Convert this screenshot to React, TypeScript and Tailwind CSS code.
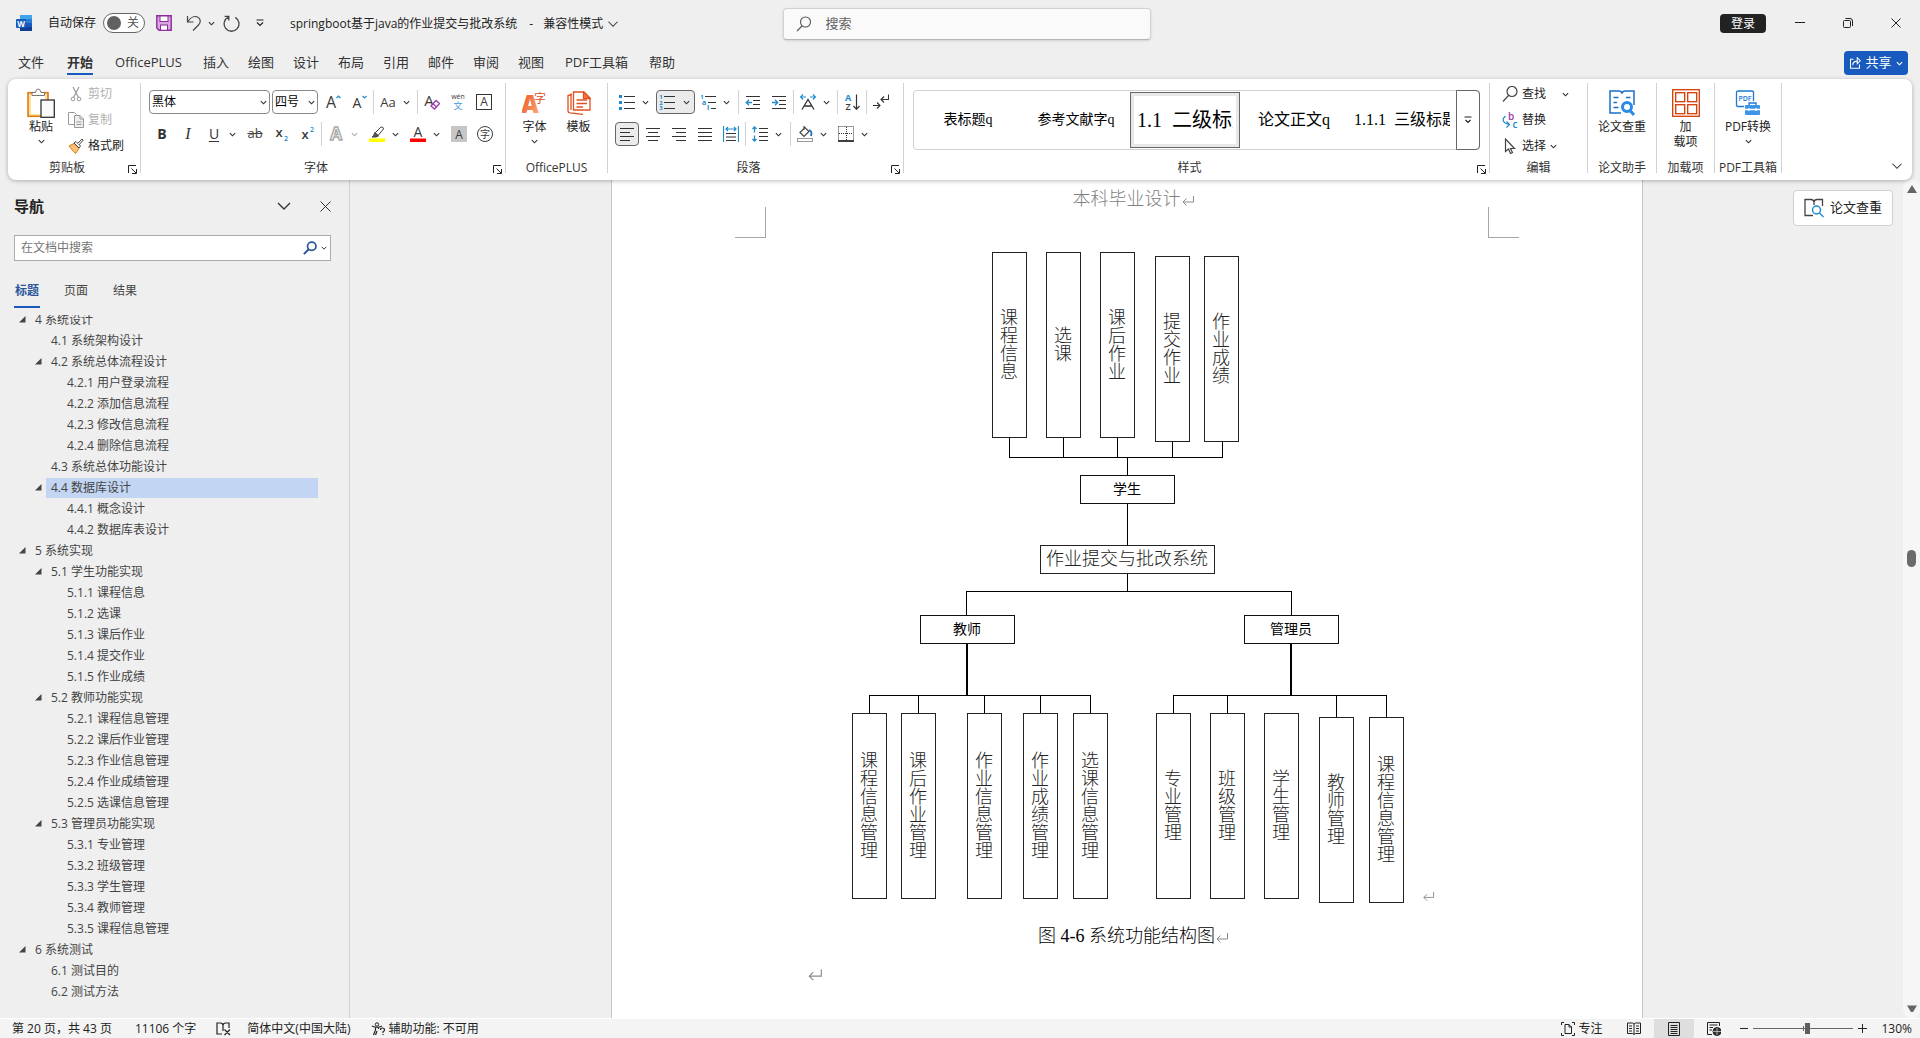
import { useState } from "react"
import type { ReactNode } from "react"

const UI = "font-['Open_Sans','Noto_Sans_CJK_SC',sans-serif]"
const SONG = "font-['Liberation_Serif','Noto_Sans_CJK_SC',serif]"

/* ---------- small shared pieces ---------- */

function Chevron({ size = 7, color = "#333" }: { size?: number; color?: string }) {
  return (
    <svg width={size} height={size} viewBox="0 0 8 8" fill="none" stroke={color} strokeWidth={size > 9 ? 0.7 : 1.3}>
      <path d="M1 2.5 L4 5.5 L7 2.5" />
    </svg>
  )
}

function Svg({ children, w = 16, h = 16, vb = "0 0 16 16" }: { children: ReactNode; w?: number; h?: number; vb?: string }) {
  return (
    <svg width={w} height={h} viewBox={vb} fill="none" stroke="#3b3b3b" strokeWidth={1} className="shrink-0">
      {children}
    </svg>
  )
}

function Divider() {
  return <div className="mt-1 h-[90px] w-px shrink-0 bg-[#d1d1d1]" />
}

function Sep() {
  return <div className="mx-px h-6 w-px shrink-0 bg-[#d1d1d1]" />
}

interface ToolProps {
  title: string
  children: ReactNode
  drop?: boolean
  dim?: boolean
}

function Tool({ title, children, drop, dim }: ToolProps) {
  return (
    <button title={title} className="flex h-6 shrink-0 items-center">
      <span className="flex w-[26px] items-center justify-center">{children}</span>
      {drop && (
        <span className="flex w-[15px] items-center pl-0.5">
          <Chevron color={dim ? "#aaa" : "#333"} />
        </span>
      )}
    </button>
  )
}

function Launcher({ title }: { title: string }) {
  return (
    <button title={title} className="mr-0.5 flex w-3 items-center justify-center pt-0.5">
      <Svg w={9} h={9} vb="0 0 9 9">
        <path d="M0.5 8 V0.5 H8 M3.5 3.5 L8 8 M8.5 4 V8.5 H4" stroke="#222" />
      </Svg>
    </button>
  )
}

interface GroupProps {
  label: string
  width: string
  launcher?: boolean
  children: ReactNode
}

function Group({ label, width, launcher, children }: GroupProps) {
  return (
    <section className={`flex flex-col ${width}`}>
      <div className="h-[81px]">{children}</div>
      <div className="flex h-4 text-xs leading-4 text-[#333]">
        <span className="flex-1 whitespace-nowrap text-center">{label}</span>
        {launcher && <Launcher title={`${label}设置`} />}
      </div>
    </section>
  )
}

function BigButton({ icon, lines, drop }: { icon: ReactNode; lines: string[]; drop?: boolean }) {
  return (
    <button className="flex flex-col items-center pt-2 text-xs leading-[15px] whitespace-nowrap text-[#222]">
      <span className="flex h-8 items-center">{icon}</span>
      {lines.map((l) => (
        <span key={l}>{l}</span>
      ))}
      {drop && (
        <span className="mt-1">
          <Chevron />
        </span>
      )}
    </button>
  )
}

/* ---------- title bar and tabs ---------- */

function TitleBar() {
  const [autoSave, setAutoSave] = useState(false)
  return (
    <header className="flex h-12 items-start text-xs text-[#222]">
      <div className="flex h-[46px] flex-1 items-center pl-4 whitespace-nowrap">
        <svg width="16" height="16" viewBox="0 0 16 16">
          <rect x="4" y="0" width="12" height="4.2" fill="#41a5ee" />
          <rect x="4" y="4" width="12" height="4" fill="#2b7cd3" />
          <rect x="4" y="8" width="12" height="4" fill="#185abd" />
          <rect x="4" y="12" width="12" height="4" fill="#103f91" />
          <rect x="0" y="4" width="10" height="9" rx="1" fill="#185abd" />
          <text x="5" y="11.5" fontSize="8" fontWeight="700" fill="#fff" textAnchor="middle" fontFamily="Open Sans">W</text>
        </svg>
        <label className="ml-4 flex items-center gap-[7px]">
          自动保存
          <input type="checkbox" className="sr-only" checked={autoSave} onChange={(e) => setAutoSave(e.target.checked)} />
          <span className="flex h-5 w-[42px] items-center gap-1.5 rounded-full border border-[#666] bg-white pl-[3px] text-[#555]">
            <span className="size-3.5 rounded-full bg-[#616161]" />
            {autoSave ? "开" : "关"}
          </span>
        </label>
        <button title="保存" className="ml-[11px]">
          <Svg>
            <path d="M0.8 0.8 H15.2 V15.2 H3 L0.8 13 Z" fill="#d9a8e0" stroke="#8e2a9b" strokeWidth="1.4" />
            <rect x="4" y="1" width="8" height="5.5" fill="#fff" stroke="#8e2a9b" />
            <rect x="4.5" y="10" width="7" height="5.2" fill="#fff" stroke="#8e2a9b" />
          </Svg>
        </button>
        <button title="撤消" className="ml-3.5 flex items-center gap-1.5">
          <Svg>
            <path d="M1.5 1 V7 H7.5 M1.5 7 C4 3 8 0.5 11.5 2 C15 3.6 15 7.5 12.5 10 L7 15.5" stroke="#444" strokeWidth="1.2" />
          </Svg>
          <Chevron />
        </button>
        <button title="重复" className="ml-2">
          <Svg w={17} h={17}>
            <path d="M1.5 1.2 H5.500 V5.200 M5 2 A7 7 0 1 0 11.5 2.2" stroke="#444" strokeWidth="1.2" />
          </Svg>
        </button>
        <button title="自定义快速访问工具栏" className="ml-4">
          <Svg w={8} h={8} vb="0 0 8 8">
            <path d="M0.5 1 H7.5 M1 3.5 L4 6.5 L7 3.5" stroke="#222" strokeWidth="1.2" />
          </Svg>
        </button>
        <button className="ml-[26px] flex items-center pt-0.5">
          springboot基于java的作业提交与批改系统
          <span className="mr-2.5 ml-3">-</span>
          兼容性模式
          <span className="ml-1"><Chevron size={12} /></span>
        </button>
      </div>
      <label className="mt-2 ml-4 flex h-8 w-[368px] shrink-0 items-center gap-3.5 rounded border border-[#d1d1d1] border-b-[#b5b5b5] bg-[#fafafa] px-3 shadow-sm">
        <Svg>
          <circle cx="9.5" cy="6" r="5" stroke="#555" strokeWidth="1.1" />
          <path d="M6 10 L1 15" stroke="#555" strokeWidth="1.1" />
        </Svg>
        <input type="text" placeholder="搜索" className="w-full bg-transparent text-[13px] outline-none placeholder:text-[#616161]" />
      </label>
      <div className="flex h-[46px] flex-1 items-center justify-end pr-[19px]">
        <button className="mr-[29px] h-[19px] w-[46px] rounded-sm bg-[#222] leading-[19px] text-white">登录</button>
        <div className="flex gap-[38px]">
          <button title="最小化">
            <Svg w={10} h={10} vb="0 0 10 10"><path d="M0 4.5 H10" stroke="#222" /></Svg>
          </button>
          <button title="还原">
            <Svg w={10} h={10} vb="0 0 10 10">
              <rect x="0.5" y="2.5" width="7" height="7" rx="1" stroke="#222" />
              <path d="M2.5 0.5 H7 Q9.5 0.5 9.5 3 V8" stroke="#222" />
            </Svg>
          </button>
          <button title="关闭">
            <Svg w={10} h={10} vb="0 0 10 10"><path d="M0.5 0.5 L9.5 9.5 M9.5 0.5 L0.5 9.5" stroke="#222" /></Svg>
          </button>
        </div>
      </div>
    </header>
  )
}

const ribbonTabs = ["文件", "开始", "OfficePLUS", "插入", "绘图", "设计", "布局", "引用", "邮件", "审阅", "视图", "PDF工具箱", "帮助"]

function RibbonTabs() {
  const [active, setActive] = useState("开始")
  return (
    <div className="flex h-[31px] items-start justify-between pr-3 pl-[18px]">
      <nav className="flex gap-[19px] pt-1 text-[13px] leading-[21px] text-[#333]">
        {ribbonTabs.map((t) => (
          <button
            key={t}
            onClick={() => setActive(t)}
            className={`border-b-2 ${t === active ? "mx-1 mr-px border-[#185abd] font-bold" : "border-transparent"} ${t.length > 4 ? "px-0.5" : ""}`}
          >
            {t}
          </button>
        ))}
      </nav>
      <button className="mt-[3px] flex h-6 w-16 items-center justify-center gap-1 rounded bg-[#185abd] text-[13px] text-white">
        <Svg w={12} h={12}>
          <path d="M6 3 H2 V15 H14 V10 M5 11 C5 7 8 5.5 11 5.5 V9 L15 5 L11 1 V5.5" stroke="#fff" strokeWidth="1.4" />
        </Svg>
        共享
        <Chevron color="#fff" size={7} />
      </button>
    </div>
  )
}

/* ---------- ribbon groups ---------- */

function ClipboardGroup() {
  return (
    <Group label="剪贴板" width="w-[132px]" launcher>
      <div className="flex pl-[19px]">
        <BigButton
          drop
          lines={["粘贴"]}
          icon={
            <svg width="28" height="30" viewBox="0 0 28 30" fill="none">
              <rect x="1" y="4.7" width="20" height="23.6" fill="#fbe0a0" stroke="#e07a10" strokeWidth="1.6" />
              <rect x="4" y="7" width="14" height="19" fill="#fff" />
              <path d="M5 7.5 V4.5 H8.5 Q9 1 11.2 1 Q13.4 1 14 4.5 H17.5 V7.5 Z" fill="#fff" stroke="#777" />
              <rect x="14" y="12" width="13.3" height="17.3" fill="#fafafa" stroke="#333" strokeWidth="1.3" />
            </svg>
          }
        />
        <div className="ml-[13px] flex flex-col gap-2.5 pt-[7px] text-xs leading-4">
          <button className="flex items-center gap-1 text-[#b0b0b0]">
            <Svg>
              <path d="M5 1 L10.5 11.5 M11 1 L5.5 11.5" stroke="#999" strokeWidth="1.2" />
              <circle cx="5" cy="13" r="1.8" stroke="#999" />
              <circle cx="11" cy="13" r="1.8" stroke="#999" />
            </Svg>
            剪切
          </button>
          <button className="flex items-center gap-1 text-[#b0b0b0]">
            <Svg>
              <path d="M6 12.5 H0.5 V0.5 H6.5 L8.5 2.5" stroke="#999" />
              <path d="M6.5 3.5 H12 L15.5 7 V15.5 H6.5 Z M12 3.5 V7 H15.5 M8.5 10 H13.5 M8.5 12.5 H13.5" fill="#eee" stroke="#999" />
            </Svg>
            复制
          </button>
          <button className="flex items-center gap-1 whitespace-nowrap text-[#222]">
            <Svg>
              <path d="M1 8 L6 5.5 L11 10.5 L7.5 15.5 L5.5 13.5 Z" fill="#fbc078" stroke="#e07a10" />
              <path d="M6 5 L8 3.5 L12.5 8 L11 10 Z" fill="#fff" stroke="#444" />
              <path d="M9.8 5.4 L14 1 L15.2 2.2 L11 6.8" fill="#fff" stroke="#444" />
            </Svg>
            格式刷
          </button>
        </div>
      </div>
    </Group>
  )
}

function Combo({ label, value, width }: { label: string; value: string; width: string }) {
  return (
    <span className={`relative flex h-6 items-center ${width}`}>
      <select
        aria-label={label}
        defaultValue={value}
        className="h-6 w-full appearance-none rounded border border-[#8a8a8a] bg-white pl-0.5 text-xs text-black"
      >
        <option>{value}</option>
      </select>
      <span className="pointer-events-none absolute right-[3px]">
        <Chevron />
      </span>
    </span>
  )
}

interface LetterProps {
  children: string
  size?: number
  x?: number
  y?: number
  fill?: string
  weight?: number
}

function Letter({ children, size = 15, x = 8, y = 13, fill = "#3b3b3b", weight = 400 }: LetterProps) {
  return (
    <text x={x} y={y} fontSize={size} fill={fill} fontWeight={weight} stroke="none" textAnchor="middle" fontFamily="Open Sans, Noto Sans CJK SC">
      {children}
    </text>
  )
}

function FontGroup() {
  return (
    <Group label="字体" width="w-[364px]" launcher>
      <div className="flex flex-col gap-2 pt-[11px] pl-2">
        <div className="flex">
          <Combo label="字体" value="黑体" width="w-[121px]" />
          <span className="w-0.5" />
          <Combo label="字号" value="四号" width="w-[46px]" />
          <span className="w-0.5" />
          <Tool title="增大字号">
            <Svg><Letter size={16} x={6} y={14}>A</Letter><path d="M11.5 4 L13.5 2 L15.5 4" stroke="#1e8bcd" strokeWidth="1.2" /></Svg>
          </Tool>
          <Tool title="减小字号">
            <Svg><Letter size={14} x={6} y={14}>A</Letter><path d="M11.5 2 L13.5 4 L15.5 2" stroke="#1e8bcd" strokeWidth="1.2" /></Svg>
          </Tool>
          <Sep />
          <Tool title="更改大小写" drop>
            <Svg w={18} vb="0 0 18 16"><Letter x={9} size={13}>Aa</Letter></Svg>
          </Tool>
          <Sep />
          <Tool title="清除所有格式">
            <Svg>
              <Letter size={15} x={5} y={12}>A</Letter>
              <path d="M7 12 L12 6.5 L15.5 9.5 L10.5 15 Z M9 9.8 L12.5 13" fill="#fff" stroke="#9a3bac" strokeWidth="1.3" />
            </Svg>
          </Tool>
          <Tool title="拼音指南">
            <Svg><Letter size={7} y={5}>wén</Letter><Letter size={9} y={15} fill="#3f9bd8">文</Letter></Svg>
          </Tool>
          <Tool title="字符边框">
            <Svg><rect x="0.5" y="0.5" width="15" height="15" stroke="#333" /><Letter size={12} y={12}>A</Letter></Svg>
          </Tool>
        </div>
        <div className="flex">
          <Tool title="加粗"><b className="text-sm text-[#333]">B</b></Tool>
          <Tool title="倾斜"><i className="font-['Liberation_Serif',serif] text-base text-[#333]">I</i></Tool>
          <Tool title="下划线" drop><span className="text-sm leading-4 text-[#333] underline underline-offset-2">U</span></Tool>
          <Tool title="删除线"><s className="text-[13px] text-[#444]">ab</s></Tool>
          <Tool title="下标">
            <Svg><Letter size={13} x={6} y={11} weight={600}>x</Letter><Letter size={7} x={13} y={15} fill="#1e8bcd" weight={600}>2</Letter></Svg>
          </Tool>
          <Tool title="上标">
            <Svg><Letter size={13} x={6} y={13} weight={600}>x</Letter><Letter size={7} x={13} y={6} fill="#1e8bcd" weight={600}>2</Letter></Svg>
          </Tool>
          <Sep />
          <Tool title="文本效果" drop dim>
            <Svg>
              <text x="8" y="14" fontSize="17" fontWeight="700" fill="#fff" stroke="#a8a8a8" strokeWidth="1.4" textAnchor="middle" fontFamily="Open Sans">A</text>
            </Svg>
          </Tool>
          <Tool title="文本突出显示颜色" drop>
            <Svg>
              <path d="M6 7 L12 1 Q14.5 0.5 14.5 3 L9 9.5 Z" stroke="#444" />
              <path d="M6 6.5 L9.5 10 L7 11 H3 L4.5 9.5 Z" fill="#555" stroke="#444" />
              <rect x="0" y="12.5" width="16" height="3.5" fill="#ff0" stroke="none" />
            </Svg>
          </Tool>
          <Tool title="字体颜色" drop>
            <Svg><Letter size={14} y={11}>A</Letter><rect x="0" y="12.5" width="16" height="3.5" fill="#f00" stroke="none" /></Svg>
          </Tool>
          <Tool title="字符底纹">
            <Svg><rect width="16" height="16" fill="#c6c6c6" stroke="none" /><Letter size={12} y={12.5}>A</Letter></Svg>
          </Tool>
          <Tool title="带圈字符">
            <Svg><circle cx="8" cy="8" r="7.5" /><Letter size={10} y={11.8}>字</Letter></Svg>
          </Tool>
        </div>
      </div>
    </Group>
  )
}

function OfficePlusGroup() {
  return (
    <Group label="OfficePLUS" width="w-[101px]">
      <div className="flex justify-center gap-5">
        <BigButton
          drop
          lines={["字体"]}
          icon={
            <svg width="24" height="24" viewBox="0 0 24 24">
              <defs>
                <linearGradient id="plusA" x1="0" y1="0" x2="1" y2="1">
                  <stop offset="0" stopColor="#e8481c" />
                  <stop offset="1" stopColor="#ffb37a" />
                </linearGradient>
              </defs>
              <text x="8" y="22" fontSize="24" fontWeight="800" fill="url(#plusA)" textAnchor="middle" fontFamily="Open Sans">A</text>
              <text x="18" y="12" fontSize="12" fill="#e0521f" textAnchor="middle" fontFamily="Noto Sans CJK SC">字</text>
            </svg>
          }
        />
        <BigButton
          lines={["模板"]}
          icon={
            <svg width="24" height="24" viewBox="0 0 24 24" fill="none" stroke="#e0521f" strokeWidth="1.3">
              <path d="M5 3.5 L1 4.5 V20 Q1 21.5 3 21.8 L16 23.3 M4 2.5 V19" />
              <path d="M6.500 1 H17 L23 7 V19 H6.5 Z M9.5 9 H20 M9.5 12.5 H20 M9.5 16 H16" />
              <path d="M16.5 1 L23 7.5 H16.5 Z" fill="#ff7a3c" />
            </svg>
          }
        />
      </div>
    </Group>
  )
}

function Lines({ rows }: { rows: number[][] }) {
  return (
    <Svg>
      {rows.map(([x1, x2], i) => (
        <path key={i} d={`M${x1} ${2.5 + i * 4} H${x2}`} stroke="#333" />
      ))}
    </Svg>
  )
}

function ParagraphGroup() {
  return (
    <Group label="段落" width="w-[295px]" launcher>
      <div className="flex flex-col gap-2 pt-[11px] pl-1.5">
        <div className="flex">
          <Tool title="项目符号" drop>
            <Svg>
              <path d="M0 2.5 H3 M0 8.5 H3 M0 14.5 H3" stroke="#1e8bcd" strokeWidth="3" />
              <path d="M5 2.5 H16 M5 8.5 H16 M5 14.5 H16" stroke="#333" />
            </Svg>
          </Tool>
          <button title="编号" className="ml-px flex h-6 w-[39px] items-center justify-between rounded border border-[#666] bg-[#ebebeb] pr-1 pl-0.5">
            <Svg>
              <Letter size={6} x={2} y={5} fill="#1e8bcd" weight={700}>1</Letter>
              <Letter size={6} x={2} y={10.5} fill="#1e8bcd" weight={700}>2</Letter>
              <Letter size={6} x={2} y={16} fill="#1e8bcd" weight={700}>3</Letter>
              <path d="M5 2.5 H16 M5 8.5 H16 M5 14.5 H16" stroke="#333" />
            </Svg>
            <Chevron />
          </button>
          <Tool title="多级列表" drop>
            <Svg>
              <Letter size={6} x={2} y={5} fill="#1e8bcd" weight={700}>1</Letter>
              <Letter size={7} x={4} y={10.5} fill="#1e8bcd" weight={700}>a</Letter>
              <Letter size={7} x={8} y={16} fill="#1e8bcd" weight={700}>i</Letter>
              <path d="M5 2.5 H16 M8 8.5 H16 M11 14.5 H16" stroke="#333" />
            </Svg>
          </Tool>
          <span className="w-px" />
          <Sep />
          <Tool title="减少缩进量">
            <Svg>
              <path d="M1 2.5 H15 M8 6.5 H15 M8 10.5 H15 M1 14.5 H15" stroke="#333" />
              <path d="M7 8.5 H1.5 M4 5.8 L1.3 8.5 L4 11.2" stroke="#1e8bcd" strokeWidth="1.3" />
            </Svg>
          </Tool>
          <Tool title="增加缩进量">
            <Svg>
              <path d="M1 2.5 H15 M8 6.5 H15 M8 10.5 H15 M1 14.5 H15" stroke="#333" />
              <path d="M1 8.5 H6.5 M4 5.8 L6.7 8.5 L4 11.2" stroke="#1e8bcd" strokeWidth="1.3" />
            </Svg>
          </Tool>
          <Sep />
          <Tool title="中文版式" drop>
            <Svg>
              <path d="M6 3 H0.8 M3 0.5 L0.5 3 L3 5.5 M10 3 H15.2 M13 0.5 L15.5 3 L13 5.5" stroke="#1e8bcd" strokeWidth="1.2" />
              <path d="M2 15.5 L8 5.5 L14 15.5 M4 12 H12" stroke="#333" strokeWidth="1.3" />
            </Svg>
          </Tool>
          <Sep />
          <Tool title="排序">
            <Svg>
              <Letter size={9} x={4} y={7} fill="#1e8bcd" weight={700}>A</Letter>
              <Letter size={9} x={4} y={16} weight={600}>Z</Letter>
              <path d="M12.5 0.5 V15 M9.5 12 L12.5 15.3 L15.5 12" stroke="#333" strokeWidth="1.2" />
            </Svg>
          </Tool>
          <Sep />
          <Tool title="显示编辑标记">
            <Svg>
              <path d="M15.5 0.5 V5.5 H8 M11 2.5 L8 5.5 L11 8.5 M0 11.5 H7 M4 8.5 L7 11.5 L4 14.5" stroke="#333" strokeWidth="1.1" />
            </Svg>
          </Tool>
        </div>
        <div className="flex">
          <button title="左对齐" className="mx-px flex size-6 items-center justify-center rounded border border-[#666] bg-[#ebebeb]">
            <Lines rows={[[1, 15], [1, 11], [1, 15], [1, 11]]} />
          </button>
          <Tool title="居中"><Lines rows={[[1, 15], [3, 13], [1, 15], [3, 13]]} /></Tool>
          <Tool title="右对齐"><Lines rows={[[1, 15], [5, 15], [1, 15], [5, 15]]} /></Tool>
          <Tool title="两端对齐"><Lines rows={[[1, 15], [1, 15], [1, 15], [1, 15]]} /></Tool>
          <Tool title="分散对齐">
            <Svg>
              <path d="M0.5 0 V16 M15.5 0 V16 M3 3 H13 M5 1 L3 3 L5 5 M11 1 L13 3 L11 5" stroke="#1e8bcd" strokeWidth="1.2" />
              <path d="M3 7.5 H13 M3 11 H13 M3 14.5 H13" stroke="#333" />
            </Svg>
          </Tool>
          <Sep />
          <Tool title="行和段落间距" drop>
            <Svg>
              <path d="M2.5 1 V6.5 M0.5 3 L2.5 1 L4.5 3 M2.5 9.5 V15 M0.5 13 L2.5 15 L4.5 13" stroke="#1e8bcd" strokeWidth="1.3" />
              <path d="M7 2.5 H16 M7 6.5 H16 M7 10.5 H16 M7 14.5 H16" stroke="#333" />
            </Svg>
          </Tool>
          <span className="w-px" />
          <Sep />
          <Tool title="底纹" drop>
            <Svg>
              <path d="M3 6.5 L8 1.5 L12 5.5 L7 10.5 Z M7 0 V4" stroke="#444" strokeWidth="1.2" />
              <path d="M12 4 Q15.5 5 14 10" stroke="#1e6fb8" strokeWidth="1.8" />
              <rect x="0.5" y="12.5" width="15" height="3" fill="#fff" stroke="#999" />
            </Svg>
          </Tool>
          <Tool title="边框" drop>
            <Svg>
              <path d="M0.5 0.5 H15.5 V14 M0.5 0.5 V14 M8.5 1 V14 M1 7.5 H15" stroke="#333" strokeDasharray="1 1" />
              <path d="M0 15 H16" stroke="#000" strokeWidth="1.5" />
            </Svg>
          </Tool>
        </div>
      </div>
    </Group>
  )
}

const styleItems = [
  { text: "表标题q", cls: "text-sm" },
  { text: "参考文献字q", cls: "text-sm" },
  { text: "1.1  二级标题", cls: "text-[20px]", selected: true },
  { text: "论文正文q", cls: "text-base" },
  { text: "1.1.1  三级标题", cls: "text-base" },
]

function StylesGroup() {
  return (
    <Group label="样式" width="min-w-0 max-w-[585px] flex-1" launcher>
      <div className="px-[9px] pt-[11px]">
        <div className={`flex h-[60px] items-center rounded border border-[#d1d1d1] ${SONG}`}>
          {styleItems.map((s) => (
            <button
              key={s.text}
              className={
                s.selected
                  ? "flex h-14 min-w-0 flex-1 items-center overflow-hidden border border-[#666] bg-white px-1.5 ring-3 ring-[#e8e8e8] ring-inset"
                  : `flex h-14 min-w-0 flex-1 items-center overflow-hidden px-1.5 ${s.text.startsWith("1") ? "" : "justify-center"}`
              }
            >
              <span className={`overflow-hidden whitespace-pre text-black ${s.cls}`}>{s.text}</span>
            </button>
          ))}
          <button title="其他" className="-my-px -mr-px flex h-[60px] w-6 items-center justify-center rounded-r border border-[#666]">
            <Svg w={8} h={8} vb="0 0 8 8">
              <path d="M0.5 1 H7.5 M1.5 4 L4 6.5 L6.5 4" stroke="#222" strokeWidth="1.2" />
            </Svg>
          </button>
        </div>
      </div>
    </Group>
  )
}

function EditGroup() {
  return (
    <Group label="编辑" width="w-[97px]">
      <div className="flex flex-col gap-2.5 pt-[7px] pl-3 text-xs leading-4 text-[#222]">
        <button className="flex items-center gap-1">
          <Svg>
            <circle cx="10" cy="5.5" r="5" stroke="#444" strokeWidth="1.2" />
            <path d="M6.5 9.5 L1 15.5" stroke="#444" strokeWidth="1.2" />
          </Svg>
          查找
          <span className="ml-3"><Chevron /></span>
        </button>
        <button className="flex items-center gap-1">
          <Svg>
            <Letter size={10} x={9} y={8} fill="#9a3bac" weight={600}>b</Letter>
            <Letter size={10} x={13} y={16} fill="#1e8bcd" weight={600}>c</Letter>
            <path d="M3.5 4 Q-1 8 3 11 L7 12.5 M4.5 9.5 L7.5 12.5 L4.5 15.5" stroke="#1e8bcd" strokeWidth="1.2" />
          </Svg>
          替换
        </button>
        <button className="flex items-center gap-1">
          <Svg>
            <path d="M3.5 1 V13.5 L6.5 11 L8.5 15.5 L10.5 14.5 L8.5 10.5 H12.5 Z" stroke="#444" strokeWidth="1.2" />
          </Svg>
          选择
          <Chevron />
        </button>
      </div>
    </Group>
  )
}

function Ribbon() {
  return (
    <div className="z-10 mx-2 flex h-[101px] shrink-0 rounded-lg bg-white shadow-[0_1px_4px_rgba(0,0,0,0.28)]">
      <ClipboardGroup />
      <Divider />
      <FontGroup />
      <Divider />
      <OfficePlusGroup />
      <Divider />
      <ParagraphGroup />
      <Divider />
      <StylesGroup />
      <Divider />
      <EditGroup />
      <Divider />
      <Group label="论文助手" width="w-[68px]">
        <div className="flex justify-center">
          <BigButton
            lines={["论文查重"]}
            icon={
              <svg width="26" height="26" viewBox="0 0 26 26" fill="none" stroke="#1c6fc9" strokeWidth="1.5">
                <path d="M13 3.5 Q12.5 1 10 1 H1 V23 H12 M13 3.5 Q13.5 1 16 1 H25 V15" />
                <path d="M4.5 7.5 H9.5 M4.5 12.5 H8 M4.5 17.5 H9.5 M17 7.5 H21.5" />
                <circle cx="18" cy="17" r="4.500" stroke="#2b8ae8" strokeWidth="3" fill="#fff" />
                <path d="M21 20.5 L25 25" stroke="#2b8ae8" strokeWidth="3" />
              </svg>
            }
          />
        </div>
      </Group>
      <Divider />
      <Group label="加载项" width="w-[57px]">
        <div className="flex justify-center">
          <BigButton
            lines={["加", "载项"]}
            icon={
              <svg width="28" height="28" viewBox="0 0 28 28" fill="none" stroke="#d83b01" strokeWidth="1.3">
                <rect x="0.7" y="0.7" width="26.6" height="26.6" />
                <rect x="3.7" y="3.7" width="9" height="9" />
                <rect x="15.7" y="3.7" width="9" height="9" />
                <rect x="3.7" y="15.7" width="9" height="9" />
                <rect x="15.7" y="15.7" width="9" height="9" />
              </svg>
            }
          />
        </div>
      </Group>
      <Divider />
      <Group label="PDF工具箱" width="w-[66px]">
        <div className="flex justify-center">
          <BigButton
            drop
            lines={["PDF转换"]}
            icon={
              <svg width="26" height="26" viewBox="0 0 26 26" fill="none" stroke="#1c78d4" strokeWidth="1.3">
                <path d="M9 16.5 H3 Q1.5 16.5 1.5 15 V2.5 Q1.5 1 3 1 H17 Q18.5 1 18.5 2.5 V11" />
                <text x="10" y="11" fontSize="7" fontWeight="600" fill="#1c78d4" stroke="none" textAnchor="middle" fontFamily="Open Sans">PDF</text>
                <rect x="10" y="15" width="15" height="10" rx="1" fill="#3d95e8" stroke="none" />
                <path d="M14 15 V13 H21 V15" />
                <path d="M10 19.5 H25 M14 18 V21 M21 18 V21" stroke="#fff" />
              </svg>
            }
          />
        </div>
      </Group>
      <Divider />
      <div className="ml-auto flex items-end pr-[9px] pb-2">
        <button title="折叠功能区"><Chevron size={12} /></button>
      </div>
    </div>
  )
}

/* ---------- navigation pane ---------- */

interface Heading {
  level: 1 | 2 | 3
  text: string
  open?: boolean
}

const headings: Heading[] = [
  { level: 1, text: "4 系统设计", open: true },
  { level: 2, text: "4.1 系统架构设计" },
  { level: 2, text: "4.2 系统总体流程设计", open: true },
  { level: 3, text: "4.2.1 用户登录流程" },
  { level: 3, text: "4.2.2 添加信息流程" },
  { level: 3, text: "4.2.3 修改信息流程" },
  { level: 3, text: "4.2.4 删除信息流程" },
  { level: 2, text: "4.3 系统总体功能设计" },
  { level: 2, text: "4.4 数据库设计", open: true },
  { level: 3, text: "4.4.1 概念设计" },
  { level: 3, text: "4.4.2 数据库表设计" },
  { level: 1, text: "5 系统实现", open: true },
  { level: 2, text: "5.1 学生功能实现", open: true },
  { level: 3, text: "5.1.1 课程信息" },
  { level: 3, text: "5.1.2 选课" },
  { level: 3, text: "5.1.3 课后作业" },
  { level: 3, text: "5.1.4 提交作业" },
  { level: 3, text: "5.1.5 作业成绩" },
  { level: 2, text: "5.2 教师功能实现", open: true },
  { level: 3, text: "5.2.1 课程信息管理" },
  { level: 3, text: "5.2.2 课后作业管理" },
  { level: 3, text: "5.2.3 作业信息管理" },
  { level: 3, text: "5.2.4 作业成绩管理" },
  { level: 3, text: "5.2.5 选课信息管理" },
  { level: 2, text: "5.3 管理员功能实现", open: true },
  { level: 3, text: "5.3.1 专业管理" },
  { level: 3, text: "5.3.2 班级管理" },
  { level: 3, text: "5.3.3 学生管理" },
  { level: 3, text: "5.3.4 教师管理" },
  { level: 3, text: "5.3.5 课程信息管理" },
  { level: 1, text: "6 系统测试", open: true },
  { level: 2, text: "6.1 测试目的" },
  { level: 2, text: "6.2 测试方法" },
]

const indent = { 1: "pl-[19px]", 2: "pl-[35px]", 3: "pl-[51px]" }

function NavigationPane() {
  const [tab, setTab] = useState("标题")
  const [current, setCurrent] = useState("4.4 数据库设计")
  return (
    <aside className="flex w-[350px] shrink-0 flex-col border-r border-[#d1d1d1] text-xs text-[#444]">
      <div className="flex items-center pt-3.5 pr-[18px] pl-3.5">
        <h2 className="flex-1 text-[15px] leading-6 font-bold text-[#222]">导航</h2>
        <button title="任务窗格选项" className="mr-7"><Chevron size={16} /></button>
        <button title="关闭">
          <Svg w={11} h={11} vb="0 0 11 11"><path d="M0.5 0.5 L10.5 10.5 M10.5 0.5 L0.5 10.5" stroke="#333" /></Svg>
        </button>
      </div>
      <label className="mt-[17px] mr-[18px] ml-3.5 flex h-[26px] items-center border border-[#ababab] bg-white pr-[3px] pl-1.5">
        <input type="text" placeholder="在文档中搜索" className="min-w-0 flex-1 outline-none placeholder:text-[#767676]" />
        <Svg w={14} h={14}>
          <circle cx="10" cy="6" r="4.800" stroke="#2b579a" strokeWidth="2" />
          <path d="M6.5 9.5 L1 15" stroke="#2b579a" strokeWidth="2.4" />
        </Svg>
        <span className="ml-1"><Chevron size={6} /></span>
      </label>
      <div className="flex gap-[23px] pt-[19px] pl-3.5">
        {["标题", "页面", "结果"].map((t) => (
          <button
            key={t}
            onClick={() => setTab(t)}
            className={`h-7 border-b-2 px-px pb-1 leading-[18px] ${t === tab ? "border-[#185abd] font-bold text-[#2b579a]" : "border-transparent"}`}
          >
            {t}
          </button>
        ))}
      </div>
      <ul className="mt-[7px] min-h-0 flex-1 overflow-hidden">
        {headings.map((h, i) => (
          <li key={h.text} className={`flex h-[21px] items-center ${i === 0 ? "-mt-1.5" : ""} ${indent[h.level]}`}>
            <svg width="7" height="7" viewBox="0 0 7 7" className="mr-1 shrink-0">
              {h.open && <path d="M6.5 0 V6.5 H0 Z" fill="#444" />}
            </svg>
            <a
              href={`#${h.text.split(" ")[0]}`}
              onClick={() => setCurrent(h.text)}
              className={`mr-[31px] h-5 flex-1 pl-[5px] leading-5 ${h.text === current ? "bg-[#c2d5f2]" : ""}`}
            >
              {h.text}
            </a>
          </li>
        ))}
      </ul>
    </aside>
  )
}

/* ---------- document ---------- */

interface Box {
  x: number
  y: number
  text: string
}

const columns: Box[] = [
  { x: 141, y: 0, text: "课程信息" },
  { x: 195, y: 0, text: "选课" },
  { x: 249, y: 0, text: "课后作业" },
  { x: 304, y: 4, text: "提交作业" },
  { x: 353, y: 4, text: "作业成绩" },
  { x: 1, y: 461, text: "课程信息管理" },
  { x: 50, y: 461, text: "课后作业管理" },
  { x: 116, y: 461, text: "作业信息管理" },
  { x: 172, y: 461, text: "作业成绩管理" },
  { x: 222, y: 461, text: "选课信息管理" },
  { x: 305, y: 461, text: "专业管理" },
  { x: 359, y: 461, text: "班级管理" },
  { x: 413, y: 461, text: "学生管理" },
  { x: 468, y: 465, text: "教师管理" },
  { x: 518, y: 465, text: "课程信息管理" },
]

const roles: Box[] = [
  { x: 229, y: 223, text: "学生" },
  { x: 69, y: 363, text: "教师" },
  { x: 393, y: 363, text: "管理员" },
]

function ReturnMark({ size = 14 }: { size?: number }) {
  return (
    <svg width={size} height={size} viewBox="0 0 14 14" fill="none" stroke="#8a8a8a" className="inline-block align-middle">
      <path d="M12.5 2 V8 H2 M5.5 4.5 L2 8 L5.5 11.5" />
    </svg>
  )
}

function StructureDiagram() {
  return (
    <div className="relative mx-auto mt-3.5 h-[651px] w-[552px]">
      <svg className="absolute inset-0" width="552" height="651" fill="none" stroke="#000" shapeRendering="crispEdges">
        <path d="M158.5 185 V205.5 H371.5 V189 M212.5 185 V205 M266.5 185 V205 M321.5 189 V205" />
        <path d="M276.5 205 V223 M276.5 252 V293 M276.5 321 V339" />
        <path d="M115.5 363 V339.5 H440.5 V363" />
        <path d="M116 391 V443 M440 391 V443" strokeWidth="2" />
        <path d="M18.5 461 V443.5 H239.5 V461 M67.5 443 V461 M133.5 443 V461 M189.5 443 V461" />
        <path d="M322.5 461 V443.5 H535.5 V465 M376.5 443 V461 M485.5 443 V465" />
      </svg>
      {columns.map((b) => (
        <div
          key={`${b.x}-${b.y}`}
          style={{ left: b.x, top: b.y }}
          className="absolute flex h-[186px] w-[35px] items-center justify-center border border-[#222] bg-white"
        >
          <span className="w-[18px] text-center text-[18px] leading-[18px] font-light break-all text-[#222]">{b.text}</span>
        </div>
      ))}
      {roles.map((b) => (
        <div
          key={b.text}
          style={{ left: b.x, top: b.y }}
          className="absolute flex h-[29px] w-[95px] items-center justify-center border border-[#111] bg-white text-sm text-black"
        >
          {b.text}
        </div>
      ))}
      <div className="absolute top-[293px] left-[189px] flex h-[29px] w-[175px] items-center justify-center border border-[#222] bg-white text-[18px] font-light whitespace-nowrap text-[#222]">
        作业提交与批改系统
      </div>
      <span className="absolute -right-8 bottom-0 leading-none">
        <ReturnMark size={13} />
      </span>
    </div>
  )
}

function DocumentPage() {
  return (
    <article className={`mx-auto h-full w-[1032px] overflow-hidden border-x border-[#c6c6c6] bg-white ${SONG}`}>
      <p className="pt-2.5 text-center text-[18px] leading-[18px] font-light text-[#808080]">
        本科毕业设计
        <span className="-mr-3.5 leading-none"><ReturnMark /></span>
      </p>
      <div className="-mt-px flex h-[31px] justify-between px-[123px]">
        <div className="w-[31px] border-r border-b border-[#a6a6a6]" />
        <div className="w-[31px] border-b border-l border-[#a6a6a6]" />
      </div>
      <StructureDiagram />
      <p className="mt-[21px] text-center text-[18px] leading-6 font-light text-black">
        图 <b>4-6</b> 系统功能结构图
        <span className="-mr-3.5 leading-none"><ReturnMark /></span>
      </p>
      <p className="mt-3.5 pl-[195px] leading-6">
        <ReturnMark size={16} />
      </p>
    </article>
  )
}

function Workspace() {
  return (
    <main className="flex min-h-0 flex-1">
      <NavigationPane />
      <div className="relative min-w-0 flex-1">
        <DocumentPage />
        <button className="absolute top-[10px] right-[10px] flex h-9 w-[100px] items-center justify-center gap-1.5 rounded border border-[#d1d1d1] bg-white text-[13px] text-[#222]">
          <Svg w={20} h={20} vb="0 0 20 20">
            <path d="M10 4 Q9.5 1.5 7 1.5 H1 V17.5 H9 M10 4 Q10.5 1.5 13 1.5 H18.5 V8 M10 4 V7" stroke="#444" strokeWidth="1.3" />
            <circle cx="12.5" cy="12" r="4" stroke="#1e8bcd" strokeWidth="1.5" />
            <path d="M15.5 15 L19.5 19" stroke="#1e8bcd" strokeWidth="1.5" />
          </Svg>
          论文查重
        </button>
      </div>
      <div className="flex w-[17px] shrink-0 flex-col items-center justify-between rounded-lg bg-[#f6f6f6] py-[5px]">
        <svg width="10" height="8" viewBox="0 0 10 8"><path d="M5 0 L10 8 H0 Z" fill="#666" /></svg>
        <div className="mb-[82px] h-[17px] w-[9px] rounded-full bg-[#6b6b6b]" />
        <svg width="10" height="8" viewBox="0 0 10 8"><path d="M0 0.5 H10 L6 7 H4 Z" fill="#666" /></svg>
      </div>
    </main>
  )
}

/* ---------- status bar ---------- */

function StatusBar() {
  return (
    <footer className="flex h-5 shrink-0 items-center border-t border-white bg-[#f4f4f4] pr-2 pl-3 text-xs leading-4 whitespace-nowrap text-[#222]">
      <button>第 20 页，共 43 页</button>
      <button className="ml-[23px]">11106 个字</button>
      <button title="校对" className="ml-5">
        <Svg w={15} h={14} vb="0 0 15 14">
          <path d="M7 3 Q6.5 1 4.5 1 H1 V12 H6 M7 3 Q7.5 1 9.5 1 H13 V6 M7 3 V9 M8.5 7.5 L14 13 M14 7.5 L8.5 13" stroke="#222" strokeWidth="1.2" />
        </Svg>
      </button>
      <button className="ml-4">简体中文(中国大陆)</button>
      <button className="ml-[21px] flex items-center gap-0.5">
        <Svg w={15} h={14} vb="0 0 15 14">
          <circle cx="6" cy="2.5" r="1.7" stroke="#222" />
          <path d="M1 4 Q6 6.5 11 4 M4.5 5.5 V8 L2.5 13 M7.5 5.5 V7 M6 9 L4.5 13 M9.5 8 Q9.5 6 11.5 6 Q13.5 6 13.5 8 Q13.5 9 12 9.8 V11 M12 12 V13" stroke="#222" strokeWidth="1.2" />
        </Svg>
        辅助功能: 不可用
      </button>
      <div className="flex-1" />
      <button className="mr-3 flex items-center gap-[3px]">
        <Svg w={14} h={14} vb="0 0 14 14">
          <path d="M3 0.5 H0.5 V3 M11 0.5 H13.5 V3 M3 13.5 H0.5 V11 M11 13.5 H13.5 V11 M4 2.5 H8 L10.5 5 V11.5 H4 Z M8 2.5 V5 H10.5" stroke="#222" />
        </Svg>
        专注
      </button>
      <button title="阅读视图" className="flex h-[19px] w-10 items-center justify-center">
        <Svg w={14} h={13} vb="0 0 14 13">
          <path d="M0.5 1 H5.5 L7 2 L8.5 1 H13.5 V11.5 H8.5 L7 12.5 L5.5 11.5 H0.5 Z M7 2 V12 M2 4 H5 M2 6.5 H5 M2 9 H5 M9 4 H12 M9 6.5 H12 M9 9 H12" stroke="#222" />
        </Svg>
      </button>
      <button title="页面视图" className="flex h-[19px] w-10 items-center justify-center bg-[#dedede]">
        <Svg w={12} h={14} vb="0 0 12 14">
          <path d="M0.5 0.5 H11.5 V13.5 H0.5 Z M2.5 3.5 H9.5 M2.5 5.5 H9.5 M2.5 7.5 H9.5 M2.5 9.5 H9.5 M2.5 11.5 H9.5" stroke="#222" />
        </Svg>
      </button>
      <button title="Web 版式视图" className="flex h-[19px] w-10 items-center justify-center">
        <Svg w={14} h={14} vb="0 0 14 14">
          <path d="M5 12.5 H0.5 V0.5 H12.5 V4 M2.5 3 H10.5 M2.5 5.5 H6 M2.5 8 H5" stroke="#222" />
          <circle cx="10" cy="9.5" r="4" fill="#333" stroke="#222" />
          <path d="M6 9.5 H14 M10 6 V13" stroke="#ddd" strokeWidth="0.7" />
        </Svg>
      </button>
      <button title="缩小" className="ml-1.5">
        <Svg w={8} h={9} vb="0 0 8 9"><path d="M0 4.5 H8" stroke="#222" /></Svg>
      </button>
      <span className="relative mx-[5px] flex h-4 w-[100px] items-center">
        <span className="absolute left-[50px] h-[5px] w-px bg-[#666]" />
        <input
          type="range"
          aria-label="缩放"
          defaultValue={54}
          className="relative h-4 w-full appearance-none bg-transparent [&::-webkit-slider-runnable-track]:h-px [&::-webkit-slider-runnable-track]:bg-[#666] [&::-webkit-slider-thumb]:-mt-[5px] [&::-webkit-slider-thumb]:h-[11px] [&::-webkit-slider-thumb]:w-[5px] [&::-webkit-slider-thumb]:appearance-none [&::-webkit-slider-thumb]:bg-[#5e5e5e]"
        />
      </span>
      <button title="放大">
        <Svg w={9} h={9} vb="0 0 9 9"><path d="M0 4.5 H9 M4.5 0 V9" stroke="#222" /></Svg>
      </button>
      <button className="ml-3.5">130%</button>
    </footer>
  )
}

export default function App() {
  return (
    <div className={`flex h-screen flex-col overflow-hidden bg-[#efefef] ${UI}`}>
      <TitleBar />
      <RibbonTabs />
      <Ribbon />
      <Workspace />
      <StatusBar />
    </div>
  )
}
